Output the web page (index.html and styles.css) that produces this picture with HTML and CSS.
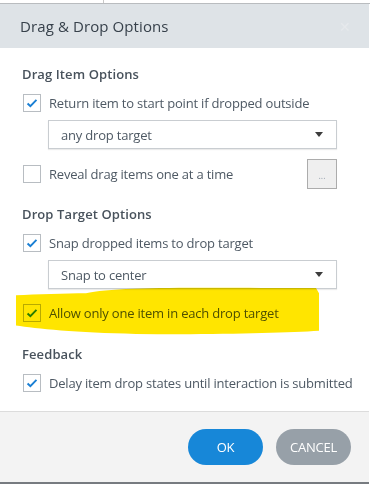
FILE: index.html
```html
<!DOCTYPE html>
<html lang="en">
<head>
    <meta charset="UTF-8">
    <meta name="viewport" content="width=device-width, initial-scale=1.0">
    <title>Drag &amp; Drop Options</title>
    <link rel="stylesheet" href="styles.css">
</head>
<body>
    <div class="topstrip"><span class="tab-divider"></span></div>

    <div class="dialog">
        <div class="dialog-header">
            <h1>Drag &amp; Drop Options</h1>
            <span class="close">&#x2715;</span>
        </div>

        <div class="dialog-body">
            <h2 class="section-title">Drag Item Options</h2>
            <label class="option">
                <span class="checkbox checked"><svg viewBox="0 0 18 18"><path d="M4 9.5l3.2 3L14 5.5"/></svg></span>
                Return item to start point if dropped outside
            </label>
            <div class="select">any drop target<span class="caret"></span></div>

            <div class="option-row">
                <label class="option">
                    <span class="checkbox"></span>
                    Reveal drag items one at a time
                </label>
                <button class="more-button">...</button>
            </div>

            <h2 class="section-title">Drop Target Options</h2>
            <label class="option">
                <span class="checkbox checked"><svg viewBox="0 0 18 18"><path d="M4 9.5l3.2 3L14 5.5"/></svg></span>
                Snap dropped items to drop target
            </label>
            <div class="select">Snap to center<span class="caret"></span></div>

            <label class="option highlighted">
                <span class="checkbox checked"><svg viewBox="0 0 18 18"><path d="M4 9.5l3.2 3L14 5.5"/></svg></span>
                Allow only one item in each drop target
                <svg class="marker" viewBox="0 0 304 48" preserveAspectRatio="none">
                    <path d="M0 8 C20 7 50 6 70 6 C100 -1 200 1 300 1 L303 6 L303 42 C270 44 200 46 120 45 C60 44 20 40 0 37 Z"/>
                </svg>
            </label>

            <h2 class="section-title feedback-title">Feedback</h2>
            <label class="option">
                <span class="checkbox checked"><svg viewBox="0 0 18 18"><path d="M4 9.5l3.2 3L14 5.5"/></svg></span>
                Delay item drop states until interaction is submitted
            </label>
        </div>

        <div class="dialog-footer">
            <button class="btn btn-ok">OK</button>
            <button class="btn btn-cancel">CANCEL</button>
        </div>
    </div>
</body>
</html>
```

FILE: styles.css
```css
* {
    margin: 0;
    padding: 0;
    box-sizing: border-box;
    font-family: "Open Sans", "Noto Sans", sans-serif;
}

body {
    width: 370px;
    height: 484px;
    background-color: #ffffff;
    overflow: hidden;
}

.topstrip {
    height: 3px;
    position: relative;
    border-bottom: 1px solid #b9bcbf;
    box-sizing: content-box;
}

.tab-divider {
    position: absolute;
    left: 103px;
    top: 0;
    width: 1px;
    height: 3px;
    background-color: #c8c8c8;
}

.dialog {
    width: 369px;
    height: 480px;
    display: flex;
    flex-direction: column;
    border-bottom: 2px solid #777b80;
}

.dialog-header {
    height: 44px;
    flex: none;
    background-color: #dee3e7;
    display: flex;
    align-items: center;
    justify-content: space-between;
    padding: 0 18px 0 20px;
}

.dialog-header h1 {
    font-size: 15px;
    font-weight: normal;
    color: #37414b;
    letter-spacing: 0.1px;
}

.close {
    color: #e6e9ec;
    font-size: 14px;
}

.dialog-body {
    flex: 1;
    padding: 18px 32px 0 22px;
    color: #4a5560;
}

.section-title {
    font-size: 13px;
    font-weight: 600;
    color: #48525c;
    letter-spacing: 0.1px;
    margin-bottom: 12px;
    line-height: 16px;
}

.option {
    display: flex;
    align-items: center;
    gap: 8px;
    font-size: 13px;
    color: #4e5964;
    letter-spacing: -0.2px;
    height: 18px;
    margin-left: 1px;
    position: relative;
    white-space: nowrap;
}

.checkbox {
    width: 18px;
    height: 18px;
    flex: none;
    border: 1px solid #b8bdc2;
    background-color: #ffffff;
    display: flex;
    align-items: center;
    justify-content: center;
}

.checkbox svg {
    width: 16px;
    height: 16px;
    fill: none;
    stroke: #1a7fd4;
    stroke-width: 2.2;
}

.select {
    margin: 8px 0 0 26px;
    height: 29px;
    border: 1px solid #c9cdd1;
    box-shadow: 0 1px 1px rgba(0,0,0,0.08);
    display: flex;
    align-items: center;
    justify-content: space-between;
    padding: 0 13px 0 12px;
    font-size: 13px;
    color: #4e5964;
    letter-spacing: -0.2px;
}

.caret {
    width: 0;
    height: 0;
    border-left: 4px solid transparent;
    border-right: 4px solid transparent;
    border-top: 5px solid #3c3c3c;
}

.option-row {
    display: flex;
    align-items: center;
    justify-content: space-between;
    margin: 10px 0 17px;
}

.more-button {
    width: 30px;
    height: 30px;
    border: 1px solid #acacac;
    background-color: #efefef;
    color: #9aa4b0;
    font-size: 9px;
    letter-spacing: 0;
    line-height: 1;
    padding-top: 2px;
}

.highlighted {
    margin-top: 15px;
}

.highlighted .marker {
    position: absolute;
    left: -7px;
    top: -17px;
    width: 304px;
    height: 50px;
    mix-blend-mode: multiply;
    pointer-events: none;
}

.marker path {
    fill: #ffe500;
}

.highlighted .checkbox svg {
    stroke: #2a8a18;
}

.feedback-title {
    margin-top: 24px;
}

.dialog-footer {
    height: 71px;
    flex: none;
    border-top: 1px solid #dcdcdc;
    background-color: #f3f3f3;
    display: flex;
    align-items: center;
    justify-content: flex-end;
    gap: 13px;
    padding: 0 18px 0 0;
}

.btn {
    width: 75px;
    height: 36px;
    border: none;
    border-radius: 18px;
    color: #ffffff;
    font-size: 13px;
    letter-spacing: -0.2px;
    cursor: pointer;
}

.btn-ok {
    background-color: #1787d8;
}

.btn-cancel {
    background-color: #97a0a8;
}
```
